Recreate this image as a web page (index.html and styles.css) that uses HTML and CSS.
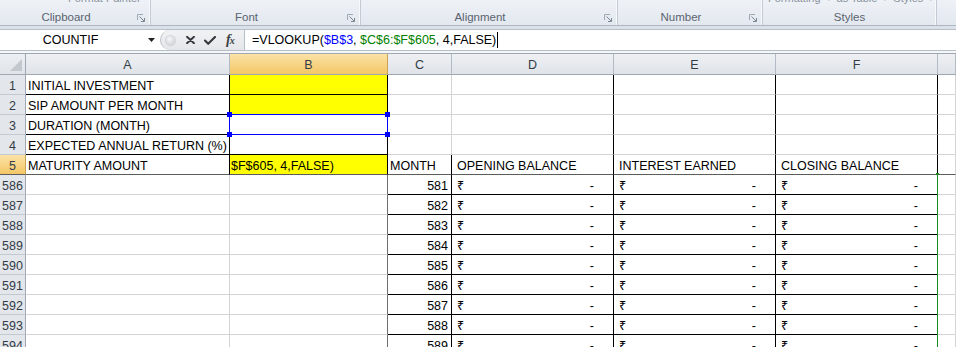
FILE: index.html
```html
<!DOCTYPE html>
<html>
<head>
<meta charset="utf-8">
<link rel="stylesheet" href="styles.css">
</head>
<body>
<div class="ribbon">
  <div class="grp g1">
    <div class="peek pk1"><svg class="brush" width="10" height="8" viewBox="0 0 10 8"><path d="M1 0h8v3l-3 3H3L1 3z" fill="#a9b0b9"/></svg><span>Format Painter</span></div>
    <div class="glabel"><span class="gname">Clipboard</span><svg class="launch" width="8" height="8" viewBox="0 0 8 8"><path d="M0.5 6V0.5H6" fill="none" stroke="#a0a8b2"/><path d="M2.5 2.5l4.5 4.5M7.5 4v3.5H4" fill="none" stroke="#7d8793"/></svg></div>
  </div>
  <div class="grp g2">
    <div class="peek"></div>
    <div class="glabel"><span class="gname">Font</span><svg class="launch" width="8" height="8" viewBox="0 0 8 8"><path d="M0.5 6V0.5H6" fill="none" stroke="#a0a8b2"/><path d="M2.5 2.5l4.5 4.5M7.5 4v3.5H4" fill="none" stroke="#7d8793"/></svg></div>
  </div>
  <div class="grp g3">
    <div class="peek"></div>
    <div class="glabel"><span class="gname">Alignment</span><svg class="launch" width="8" height="8" viewBox="0 0 8 8"><path d="M0.5 6V0.5H6" fill="none" stroke="#a0a8b2"/><path d="M2.5 2.5l4.5 4.5M7.5 4v3.5H4" fill="none" stroke="#7d8793"/></svg></div>
  </div>
  <div class="grp g4">
    <div class="peek"></div>
    <div class="glabel"><span class="gname">Number</span><svg class="launch" width="8" height="8" viewBox="0 0 8 8"><path d="M0.5 6V0.5H6" fill="none" stroke="#a0a8b2"/><path d="M2.5 2.5l4.5 4.5M7.5 4v3.5H4" fill="none" stroke="#7d8793"/></svg></div>
  </div>
  <div class="grp g5">
    <div class="peek pk5"><span>Formatting</span><span class="dd">▾</span><span>as Table</span><span class="dd">▾</span><span>Styles</span><span class="dd">▾</span></div>
    <div class="glabel"><span class="gname">Styles</span></div>
  </div>
  <div class="grp g6"></div>
</div>

<div class="fwrap">
  <div class="fbar">
    <div class="namebox"><span class="nbtext">COUNTIF</span><svg class="nbarrow" width="7" height="4" viewBox="0 0 7 4"><path d="M0 0h7L3.5 4z" fill="#222"/></svg></div>
    <div class="fbtns">
      <span class="knob"></span>
      <svg class="bx" width="9" height="8" viewBox="0 0 9 8"><path d="M1 0.8l7 6.4M8 0.8l-7 6.4" stroke="#33383e" stroke-width="1.9" stroke-linecap="round"/></svg>
      <svg class="bc" width="12" height="9" viewBox="0 0 12 9"><path d="M1 4.6l3.2 3.2L11 1" fill="none" stroke="#33383e" stroke-width="2.1" stroke-linecap="round" stroke-linejoin="round"/></svg>
      <span class="fx">f<span class="fxx">x</span></span>
    </div>
    <div class="finput">=VLOOKUP(<span class="rb">$B$3</span>, <span class="rg">$C$6:$F$605</span>, 4,FALSE)<span class="caret"></span></div>
  </div>
</div>

<div class="sheet">
  <div class="corner"><svg width="12" height="12" viewBox="0 0 12 12"><path d="M12 0V12H0z" fill="#c3c8ce"/></svg></div>
  <div class="hd">A</div>
  <div class="hd sel">B</div>
  <div class="hd">C</div>
  <div class="hd">D</div>
  <div class="hd">E</div>
  <div class="hd">F</div>
  <div class="hd"></div>

  <div class="rn">1</div>
  <div class="k">INITIAL INVESTMENT</div>
  <div class="k y"></div>
  <div></div>
  <div class="kr"></div>
  <div class="kr"></div>
  <div class="kr"></div>
  <div></div>

  <div class="rn">2</div>
  <div class="k">SIP AMOUNT PER MONTH</div>
  <div class="k y"></div>
  <div></div>
  <div class="kr"></div>
  <div class="kr"></div>
  <div class="kr"></div>
  <div></div>

  <div class="rn">3</div>
  <div class="k">DURATION (MONTH)</div>
  <div class="k"></div>
  <div></div>
  <div class="kr"></div>
  <div class="kr"></div>
  <div class="kr"></div>
  <div></div>

  <div class="rn">4</div>
  <div class="k">EXPECTED ANNUAL RETURN (%)</div>
  <div class="k"></div>
  <div></div>
  <div class="kr"></div>
  <div class="kr"></div>
  <div class="kr"></div>
  <div></div>

  <div class="rn sel r5">5</div>
  <div class="k r5">MATURITY AMOUNT</div>
  <div class="k y r5 edit">$F$605, 4,FALSE)</div>
  <div class="k r5">MONTH</div>
  <div class="k r5 pl">OPENING BALANCE</div>
  <div class="k r5 pl">INTEREST EARNED</div>
  <div class="k r5 pl">CLOSING BALANCE</div>
  <div class="r5"></div>

  <div class="rn">586</div><div></div><div class="bm"></div><div class="k num">581</div><div class="k acc"><span>₹</span><span>-</span></div><div class="k acc"><span>₹</span><span>-</span></div><div class="k acc"><span>₹</span><span>-</span></div><div></div>
  <div class="rn">587</div><div></div><div class="bm"></div><div class="k num">582</div><div class="k acc"><span>₹</span><span>-</span></div><div class="k acc"><span>₹</span><span>-</span></div><div class="k acc"><span>₹</span><span>-</span></div><div></div>
  <div class="rn">588</div><div></div><div class="bm"></div><div class="k num">583</div><div class="k acc"><span>₹</span><span>-</span></div><div class="k acc"><span>₹</span><span>-</span></div><div class="k acc"><span>₹</span><span>-</span></div><div></div>
  <div class="rn">589</div><div></div><div class="bm"></div><div class="k num">584</div><div class="k acc"><span>₹</span><span>-</span></div><div class="k acc"><span>₹</span><span>-</span></div><div class="k acc"><span>₹</span><span>-</span></div><div></div>
  <div class="rn">590</div><div></div><div class="bm"></div><div class="k num">585</div><div class="k acc"><span>₹</span><span>-</span></div><div class="k acc"><span>₹</span><span>-</span></div><div class="k acc"><span>₹</span><span>-</span></div><div></div>
  <div class="rn">591</div><div></div><div class="bm"></div><div class="k num">586</div><div class="k acc"><span>₹</span><span>-</span></div><div class="k acc"><span>₹</span><span>-</span></div><div class="k acc"><span>₹</span><span>-</span></div><div></div>
  <div class="rn">592</div><div></div><div class="bm"></div><div class="k num">587</div><div class="k acc"><span>₹</span><span>-</span></div><div class="k acc"><span>₹</span><span>-</span></div><div class="k acc"><span>₹</span><span>-</span></div><div></div>
  <div class="rn">593</div><div></div><div class="bm"></div><div class="k num">588</div><div class="k acc"><span>₹</span><span>-</span></div><div class="k acc"><span>₹</span><span>-</span></div><div class="k acc"><span>₹</span><span>-</span></div><div></div>
  <div class="rn">594</div><div></div><div class="bm"></div><div class="k num">589</div><div class="k acc"><span>₹</span><span>-</span></div><div class="k acc"><span>₹</span><span>-</span></div><div class="k acc"><span>₹</span><span>-</span></div><div></div>

  <span class="selbox"><i class="h tl"></i><i class="h tr"></i><i class="h bl"></i><i class="h br"></i></span>
  <span class="grange"></span>
  <span class="ghandle"></span>
</div>
</body>
</html>
```

FILE: styles.css
```css
* { box-sizing: border-box; margin: 0; padding: 0; }
html, body { width: 956px; height: 347px; overflow: hidden; background: #fff; }
body { font-family: "Liberation Sans", Arial, sans-serif; color: #000; }

/* Ribbon */
.ribbon {
  height: 26px;
  display: flex;
  border-bottom: 1px solid #aeb6c1;
  background: linear-gradient(#eef2f7, #e3e8ef);
  overflow: hidden;
}
.grp {
  display: flex;
  flex-direction: column;
  justify-content: space-between;
  border-right: 1px solid #c3cad4;
  box-shadow: inset -1px 0 0 #f7f9fb;
}
.g1 { width: 151px; }
.g2 { width: 210px; }
.g3 { width: 257px; }
.g4 { width: 145px; }
.g5 { width: 174px; }
.g6 { flex: 1; border-right: 0; box-shadow: none; }
.peek {
  height: 4px;
  display: flex;
  align-items: flex-end;
  font-size: 11px;
  line-height: 11px;
  color: #8c939d;
  white-space: nowrap;
}
.pk1 { padding-left: 52px; gap: 6px; }
.brush { margin-bottom: 3px; }
.pk5 { padding-left: 5px; }
.pk5 .dd { font-size: 7px; margin: 0 6px 0 6px; }
.glabel {
  display: flex;
  align-items: center;
  height: 15px;
  line-height: 15px;
  font-size: 11.5px;
  color: #5a636f;
}
.gname { flex: 1; text-align: center; }
.launch { margin: 1px 5px 0 5px; }

/* Formula bar */
.fwrap {
  height: 28px;
  padding-top: 3px;
  background: linear-gradient(#dbe1e8 0, #dbe1e8 3px, #f4f6f8 3px);
  border-bottom: 1px solid #9ea7b2;
}
.fbar {
  height: 22px;
  display: flex;
  border-top: 1px solid #b6bec8;
  border-bottom: 1px solid #b6bec8;
  background: #fff;
  font-size: 12.5px;
}
.namebox {
  width: 160px;
  display: flex;
  align-items: center;
  background: #fff;
}
.nbtext { width: 141px; text-align: center; line-height: 19px; padding-top: 1px; }
.nbarrow { margin-left: 7px; }
.fbtns {
  width: 84px;
  display: flex;
  align-items: center;
  background: linear-gradient(#f1f2f4, #e4e6e9);
  border-left: 1px solid #b6bec8;
  border-radius: 10px 0 0 10px;
}
.knob {
  width: 9px;
  height: 9px;
  margin-left: 5px;
  border-radius: 50%;
  background: radial-gradient(circle at 40% 35%, #f7f8f9, #c3c8ce);
  box-shadow: 0 0 0 1px #d0d4d9;
}
.bx { margin-left: 11px; }
.bc { margin-left: 9px; }
.fx {
  margin-left: 10px;
  font-family: "Liberation Serif", "Times New Roman", serif;
  font-style: italic;
  font-weight: bold;
  font-size: 14px;
  color: #3a3f45;
  letter-spacing: -1px;
}
.fxx { font-size: 10px; }
.finput {
  flex: 1;
  border-left: 1px solid #b6bec8;
  padding: 1px 0 0 7px;
  line-height: 19px;
  white-space: nowrap;
}
.rb { color: #0000ff; }
.rg { color: #008000; }
.caret {
  display: inline-block;
  width: 1px;
  height: 16px;
  background: #000;
  vertical-align: -4px;
  margin-left: 1px;
}

/* Sheet grid */
.sheet {
  position: relative;
  display: grid;
  grid-template-columns: 26px 204px 158px 64px 162px 162px 162px 1fr;
  grid-template-rows: 21px;
  grid-auto-rows: 20px;
  font-size: 12.5px;
  line-height: 18px;
}
.sheet > div {
  border-right: 1px solid #d4d4d4;
  border-bottom: 1px solid #d4d4d4;
  white-space: nowrap;
  overflow: hidden;
  padding: 2px 2px 0 2px;
}
.sheet > .corner {
  background: linear-gradient(#eceff3, #e0e4e9);
  border-right-color: #9ea7b2;
  border-bottom-color: #9ea7b2;
  display: flex;
  align-items: flex-end;
  justify-content: flex-end;
  padding: 0 3px 3px 0;
}
.sheet > .hd {
  background: linear-gradient(#eef0f3, #dfe3e8);
  border-right-color: #b3bbc4;
  border-bottom-color: #9ea7b2;
  text-align: center;
  color: #333c47;
}
.sheet > .rn {
  background: #e3e6ea;
  border-right-color: #9ea7b2;
  border-bottom-color: #c3c9d1;
  text-align: center;
  color: #333c47;
  padding-left: 0;
  padding-right: 0;
}
.sheet > .sel {
  background: linear-gradient(#fbe2a6, #f4c766);
  border-right-color: #c9a354;
}
.sheet > .k { border-right-color: #000; border-bottom-color: #000; }
.sheet > .kr { border-right-color: #000; }
.sheet > .y { background: #ffff00; }
.sheet > .r5 { border-bottom-color: #5c5c5c; }
.sheet > .bm { border-right-color: #6e6e6e; }
.sheet > .num { text-align: right; padding-right: 3px; }
.sheet > .pl { padding-left: 5px; }
.sheet > .acc {
  display: flex;
  justify-content: space-between;
  padding-left: 5px;
  padding-right: 19px;
}
.sheet > .edit { padding-left: 1px; }

.selbox {
  position: absolute;
  z-index: 2;
  left: 229px;
  top: 60px;
  width: 159px;
  height: 21px;
  border: 1px solid #0000ff;
}
.h {
  position: absolute;
  width: 5px;
  height: 5px;
  background: #0000ff;
}
.tl { left: -3px; top: -3px; }
.tr { right: -3px; top: -3px; }
.bl { left: -3px; bottom: -3px; }
.br { right: -3px; bottom: -3px; }
.grange {
  position: absolute;
  z-index: 2;
  left: 937px;
  top: 120px;
  width: 1px;
  height: 200px;
  background: #1f8a1f;
}
.ghandle {
  position: absolute;
  z-index: 2;
  left: 936px;
  top: 119px;
  width: 3px;
  height: 2px;
  background: #1f8a1f;
}
```
